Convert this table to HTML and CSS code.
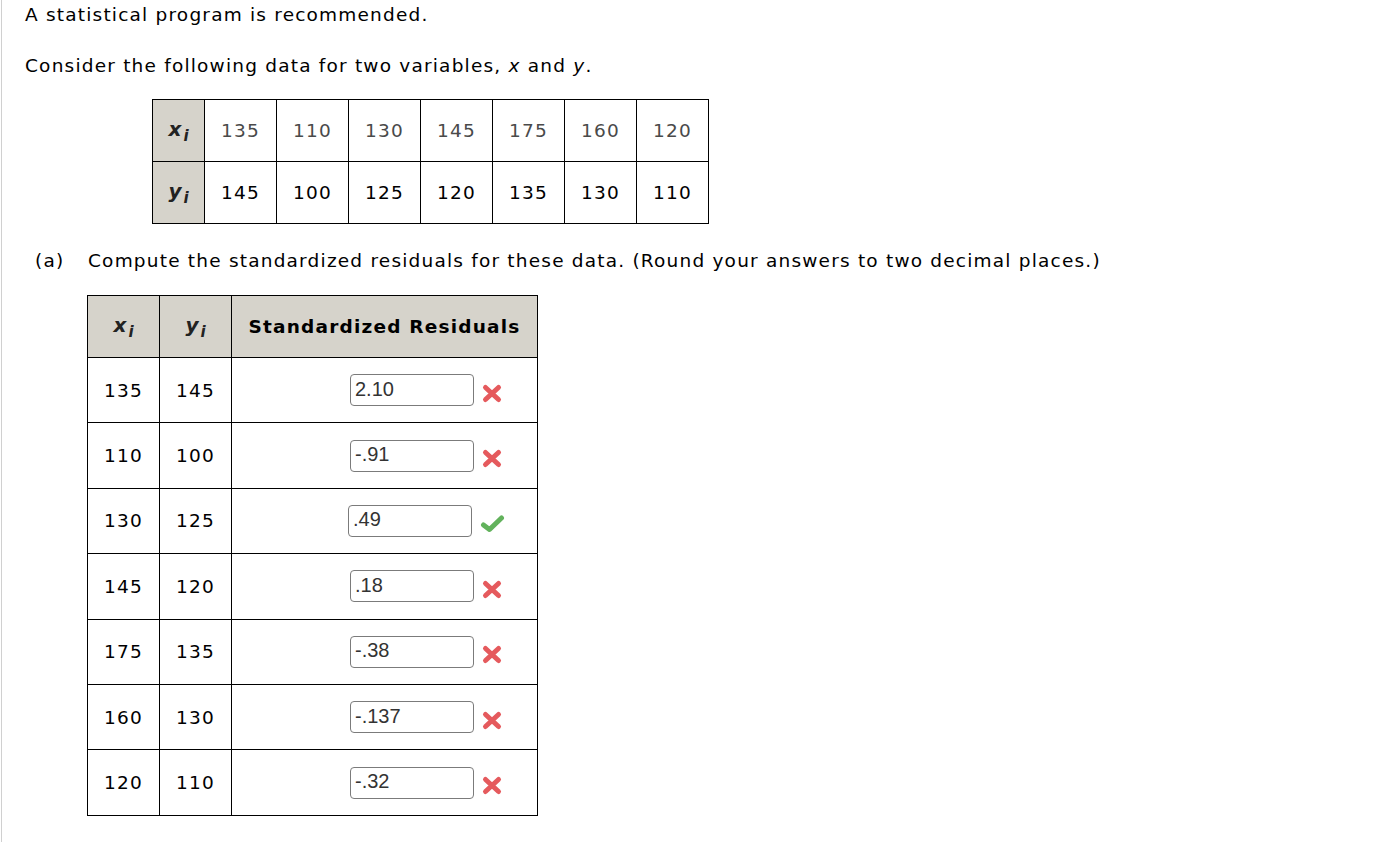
FILE: index.html
```html
<!DOCTYPE html>
<html>
<head>
<meta charset="utf-8">
<link rel="stylesheet" href="styles.css">
</head>
<body>
<div class="page">
  <p class="line first">A statistical program is recommended.</p>
  <p class="line second">Consider the following data for two variables, <i>x</i> and <i>y</i>.</p>

  <table class="data">
    <tr class="xrow">
      <th><span class="var">x<sub>i</sub></span></th>
      <td>135</td><td>110</td><td>130</td><td>145</td><td>175</td><td>160</td><td>120</td>
    </tr>
    <tr class="yrow">
      <th><span class="var">y<sub>i</sub></span></th>
      <td>145</td><td>100</td><td>125</td><td>120</td><td>135</td><td>130</td><td>110</td>
    </tr>
  </table>

  <div class="part">
    <span class="label">(a)</span>
    <span class="ptext">Compute the standardized residuals for these data. (Round your answers to two decimal places.)</span>
  </div>

  <table class="resid">
    <tr class="head">
      <th class="cx"><span class="var">x<sub>i</sub></span></th>
      <th class="cy"><span class="var">y<sub>i</sub></span></th>
      <th class="cs">Standardized Residuals</th>
    </tr>
    <tr><td>135</td><td>145</td><td class="ans"><div class="wrap"><input class="box" value="2.10"><svg class="ico" viewBox="0 0 22 21"><path d="M4.5 4.5 L17.5 16.5 M17.5 4.5 L4.5 16.5" stroke="#e55a5d" stroke-width="5" stroke-linecap="round"/></svg></div></td></tr>
    <tr><td>110</td><td>100</td><td class="ans"><div class="wrap"><input class="box" value="-.91"><svg class="ico" viewBox="0 0 22 21"><path d="M4.5 4.5 L17.5 16.5 M17.5 4.5 L4.5 16.5" stroke="#e55a5d" stroke-width="5" stroke-linecap="round"/></svg></div></td></tr>
    <tr><td>130</td><td>125</td><td class="ans"><div class="wrap ok"><input class="box" value=".49"><svg class="ico chk" viewBox="0 0 25 19"><path d="M3.5 11 L9.5 15.5 L21.5 4" fill="none" stroke="#62b25c" stroke-width="5" stroke-linecap="round" stroke-linejoin="round"/></svg></div></td></tr>
    <tr><td>145</td><td>120</td><td class="ans"><div class="wrap"><input class="box" value=".18"><svg class="ico" viewBox="0 0 22 21"><path d="M4.5 4.5 L17.5 16.5 M17.5 4.5 L4.5 16.5" stroke="#e55a5d" stroke-width="5" stroke-linecap="round"/></svg></div></td></tr>
    <tr><td>175</td><td>135</td><td class="ans"><div class="wrap"><input class="box" value="-.38"><svg class="ico" viewBox="0 0 22 21"><path d="M4.5 4.5 L17.5 16.5 M17.5 4.5 L4.5 16.5" stroke="#e55a5d" stroke-width="5" stroke-linecap="round"/></svg></div></td></tr>
    <tr><td>160</td><td>130</td><td class="ans"><div class="wrap"><input class="box" value="-.137"><svg class="ico" viewBox="0 0 22 21"><path d="M4.5 4.5 L17.5 16.5 M17.5 4.5 L4.5 16.5" stroke="#e55a5d" stroke-width="5" stroke-linecap="round"/></svg></div></td></tr>
    <tr><td>120</td><td>110</td><td class="ans"><div class="wrap"><input class="box" value="-.32"><svg class="ico" viewBox="0 0 22 21"><path d="M4.5 4.5 L17.5 16.5 M17.5 4.5 L4.5 16.5" stroke="#e55a5d" stroke-width="5" stroke-linecap="round"/></svg></div></td></tr>
  </table>
</div>
</body>
</html>
```
FILE: styles.css
```css
html, body {
  margin: 0;
  padding: 0;
  background: #fff;
}
body {
  font-family: "DejaVu Sans", Verdana, sans-serif;
  font-size: 18.5px;
  letter-spacing: 1.2px;
  color: #000;
}
.page {
  margin-left: 1px;
  border-left: 1px solid #d0d0d0;
  padding-left: 23px;
  min-height: 842px;
  box-sizing: border-box;
  padding-top: 1px;
}
.line {
  margin: 0;
  line-height: 28px;
}
.second {
  margin-top: 23px;
}
.data {
  border-collapse: collapse;
  margin-left: 127px;
  margin-top: 19px;
}
.data th, .data td {
  border: 1px solid #000;
  height: 62px;
  padding: 0;
  text-align: center;
  box-sizing: border-box;
}
.data th {
  width: 52px;
  background: #d6d3cb;
}
.data td {
  width: 72px;
}
.xrow td {
  color: #4a4a4a;
}
.var {
  font-weight: bold;
  font-style: italic;
  font-size: 20px;
  letter-spacing: 0;
  color: #222;
}
.var sub {
  font-size: 15px;
  vertical-align: -5px;
  margin-left: 2px;
}
.part {
  display: flex;
  margin-top: 25px;
  line-height: 24px;
}
.label {
  margin-left: 10px;
  width: 53px;
}
.resid {
  border-collapse: collapse;
  margin-left: 62px;
  margin-top: 22px;
}
.resid th, .resid td {
  border: 1px solid #000;
  padding: 0;
  box-sizing: border-box;
  text-align: center;
  height: 65.4px;
}
.resid .head th {
  background: #d6d3cb;
  height: 62px;
}
.cx, .cy {
  width: 72px;
}
.cs {
  width: 306px;
  font-weight: bold;
}
.ans {
  text-align: right;
}
.wrap {
  display: flex;
  align-items: center;
  justify-content: flex-end;
  padding-right: 34px;
}
.box {
  width: 124px;
  height: 32px;
  box-sizing: border-box;
  border: 1px solid #7b7b7b;
  border-radius: 4px;
  font-family: "Liberation Sans", Arial, sans-serif;
  font-size: 20px;
  letter-spacing: 0;
  color: #333;
  padding: 0 0 2px 4px;
  margin: 0;
  background: #fff;
  outline: none;
}
.ico {
  width: 22px;
  height: 21px;
  margin-left: 7px;
  margin-top: 6px;
}
.ok {
  padding-right: 32px;
}
.ok .chk {
  width: 25px;
  height: 19px;
  margin-left: 8px;
}
```
